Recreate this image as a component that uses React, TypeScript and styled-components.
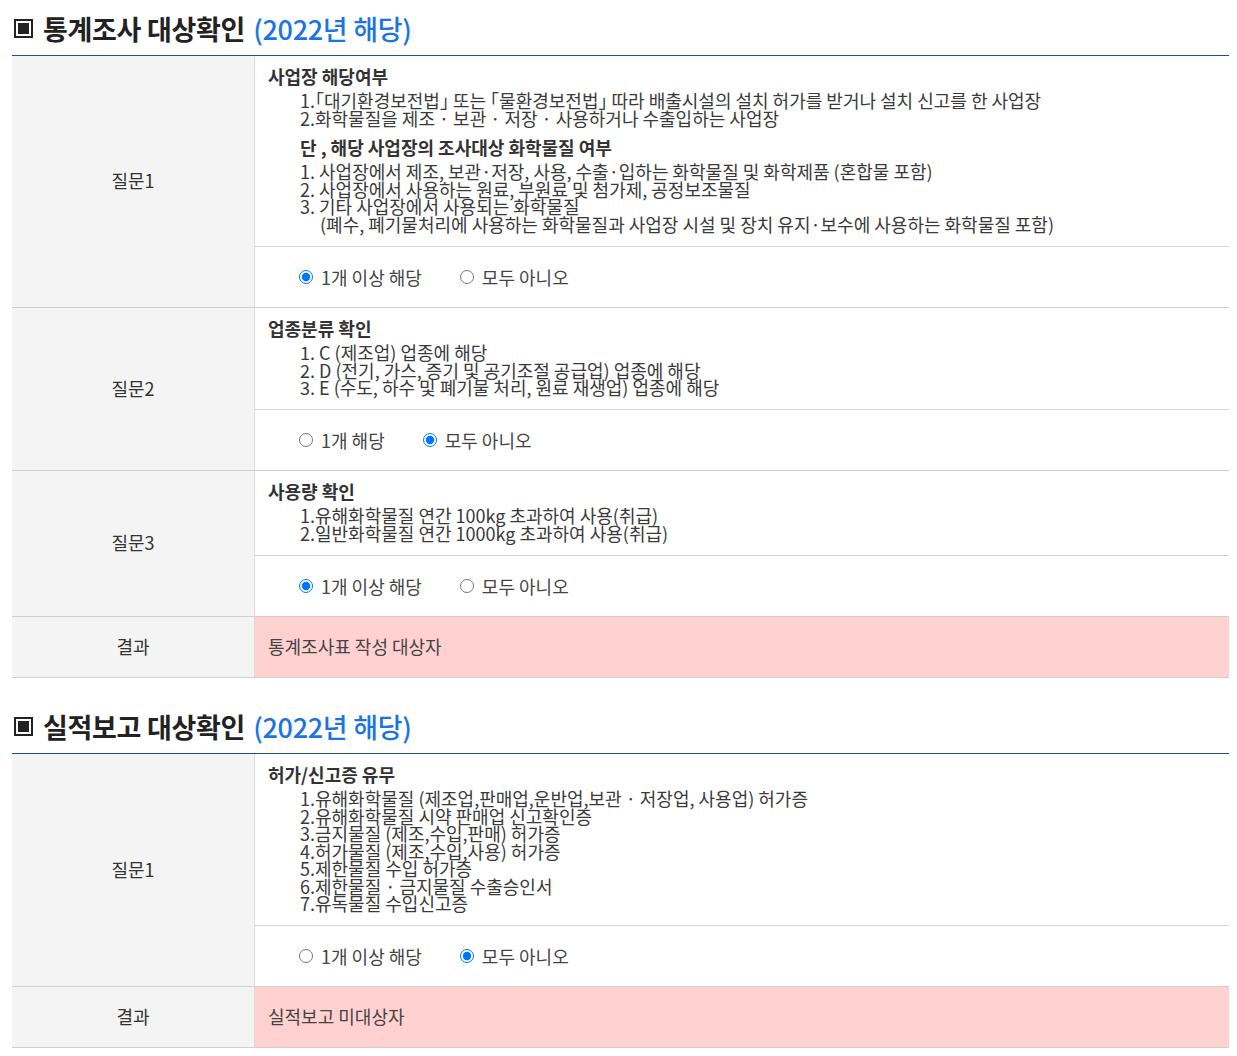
import React from 'react';
import styled, { createGlobalStyle } from 'styled-components';

const GlobalStyle = createGlobalStyle`
  body {
    margin: 0;
    background: #fff;
    font-family: "Noto Sans CJK KR", "Noto Sans", sans-serif;
    color: #333;
  }
`;

const Page = styled.div`
  padding: 0 8px 20px 12px;
`;

const Section = styled.section`
  & + & {
    margin-top: 20px;
  }
`;

const Title = styled.h2`
  margin: 0;
  height: 55px;
  padding: 2px 0 0 2px;
  box-sizing: border-box;
  display: flex;
  align-items: center;
  gap: 10px;
  font-size: 27px;
  font-weight: 700;
  color: #222;
  letter-spacing: -0.3px;
`;

const TitleMark = styled.span`
  width: 19px;
  height: 19px;
  box-sizing: border-box;
  border: 2px solid #222;
  display: flex;
  align-items: center;
  justify-content: center;
  flex: none;
  &::after {
    content: '';
    width: 11px;
    height: 11px;
    background: #222;
  }
`;

const Year = styled.span`
  color: #1b75e0;
  font-weight: 500;
  margin-left: 8px;
`;

const Table = styled.div`
  border-top: 1px solid #1f4e8c;
`;

const Row = styled.div`
  display: grid;
  grid-template-columns: 243px 1fr;
  border-bottom: 1px solid #cfcfcf;
`;

const Label = styled.div`
  background: #f4f4f4;
  border-right: 1px solid #dcdcdc;
  display: flex;
  align-items: center;
  justify-content: center;
  padding-bottom: 3px;
  font-size: 18px;
  color: #333;
`;

const Cell = styled.div`
  display: flex;
  flex-direction: column;
`;

const Content = styled.div<{ $odd?: boolean }>`
  padding: 10px 13px ${(p) => (p.$odd ? '12.5px' : '13px')};
  font-size: 18px;
  font-feature-settings: "halt";
`;

const Heading = styled.div<{ $indent?: boolean; $gap?: boolean }>`
  font-weight: 700;
  line-height: 20px;
  color: #333;
  padding-left: ${(p) => (p.$indent ? '32px' : '0')};
  margin-top: ${(p) => (p.$gap ? '10px' : '0')};
`;

const List = styled.div`
  margin-top: 6px;
  padding-left: 32px;
  line-height: 17.5px;
  color: #3a3a3a;
`;

const Line = styled.div<{ $indent?: boolean }>`
  white-space: nowrap;
  padding-left: ${(p) => (p.$indent ? '20px' : '0')};
`;

const Options = styled.div`
  height: 61px;
  box-sizing: border-box;
  border-top: 1px solid #d5d5d5;
  padding-left: 44px;
  display: flex;
  align-items: center;
  gap: 38px;
  font-size: 18px;
  color: #444;
`;

const Option = styled.label`
  display: inline-flex;
  align-items: center;
  gap: 8px;
`;

const Radio = styled.input`
  width: 14px;
  height: 14px;
  margin: 0;
`;

const Result = styled.div`
  height: 60px;
  background: #ffd1d1;
  padding: 0 0 2px 13px;
  box-sizing: border-box;
  display: flex;
  align-items: center;
  font-size: 18px;
  color: #444;
`;

type Q = {
  label: string;
  blocks: { heading: string; sub?: boolean; lines: { text: string; indent?: boolean }[] }[];
  options: string[];
  checked: number;
  name: string;
};

const section1: Q[] = [
  {
    label: '질문1',
    name: 's1q1',
    blocks: [
      {
        heading: '사업장 해당여부',
        lines: [
          { text: '1.「대기환경보전법」 또는 「물환경보전법」 따라 배출시설의 설치 허가를 받거나 설치 신고를 한 사업장' },
          { text: '2.화학물질을 제조 · 보관 · 저장 · 사용하거나 수출입하는 사업장' },
        ],
      },
      {
        heading: '단 , 해당 사업장의 조사대상 화학물질 여부',
        sub: true,
        lines: [
          { text: '1. 사업장에서 제조, 보관·저장, 사용, 수출·입하는 화학물질 및 화학제품 (혼합물 포함)' },
          { text: '2. 사업장에서 사용하는 원료, 부원료 및 첨가제, 공정보조물질' },
          { text: '3. 기타 사업장에서 사용되는 화학물질' },
          { text: '(폐수, 폐기물처리에 사용하는 화학물질과 사업장 시설 및 장치 유지·보수에 사용하는 화학물질 포함)', indent: true },
        ],
      },
    ],
    options: ['1개 이상 해당', '모두 아니오'],
    checked: 0,
  },
  {
    label: '질문2',
    name: 's1q2',
    blocks: [
      {
        heading: '업종분류 확인',
        lines: [
          { text: '1. C (제조업) 업종에 해당' },
          { text: '2. D (전기, 가스, 증기 및 공기조절 공급업) 업종에 해당' },
          { text: '3. E (수도, 하수 및 폐기물 처리, 원료 재생업) 업종에 해당' },
        ],
      },
    ],
    options: ['1개 해당', '모두 아니오'],
    checked: 1,
  },
  {
    label: '질문3',
    name: 's1q3',
    blocks: [
      {
        heading: '사용량 확인',
        lines: [
          { text: '1.유해화학물질 연간 100kg 초과하여 사용(취급)' },
          { text: '2.일반화학물질 연간 1000kg 초과하여 사용(취급)' },
        ],
      },
    ],
    options: ['1개 이상 해당', '모두 아니오'],
    checked: 0,
  },
];

const section2: Q[] = [
  {
    label: '질문1',
    name: 's2q1',
    blocks: [
      {
        heading: '허가/신고증 유무',
        lines: [
          { text: '1.유해화학물질 (제조업,판매업,운반업,보관 · 저장업, 사용업) 허가증' },
          { text: '2.유해화학물질 시약 판매업 신고확인증' },
          { text: '3.금지물질 (제조,수입,판매) 허가증' },
          { text: '4.허가물질 (제조,수입,사용) 허가증' },
          { text: '5.제한물질 수입 허가증' },
          { text: '6.제한물질 · 금지물질 수출승인서' },
          { text: '7.유독물질 수입신고증' },
        ],
      },
    ],
    options: ['1개 이상 해당', '모두 아니오'],
    checked: 1,
  },
];

const QuestionRow = ({ q }: { q: Q }) => {
  const total = q.blocks.reduce((n, b) => n + b.lines.length, 0);
  return (
    <Row>
      <Label>{q.label}</Label>
      <Cell>
        <Content $odd={total % 2 === 1}>
          {q.blocks.map((b, i) => (
            <React.Fragment key={i}>
              <Heading $indent={b.sub} $gap={i > 0}>
                {b.heading}
              </Heading>
              <List>
                {b.lines.map((l, j) => (
                  <Line key={j} $indent={l.indent}>
                    {l.text}
                  </Line>
                ))}
              </List>
            </React.Fragment>
          ))}
        </Content>
        <Options>
          {q.options.map((o, i) => (
            <Option key={o}>
              <Radio type="radio" name={q.name} defaultChecked={i === q.checked} />
              {o}
            </Option>
          ))}
        </Options>
      </Cell>
    </Row>
  );
};

const ResultRow = ({ text }: { text: string }) => (
  <Row>
    <Label>결과</Label>
    <Result>{text}</Result>
  </Row>
);

export default function App() {
  return (
    <>
      <GlobalStyle />
      <Page>
        <Section>
          <Title>
            <TitleMark />
            <span>
              통계조사 대상확인<Year>(2022년 해당)</Year>
            </span>
          </Title>
          <Table>
            {section1.map((q) => (
              <QuestionRow key={q.name} q={q} />
            ))}
            <ResultRow text="통계조사표 작성 대상자" />
          </Table>
        </Section>
        <Section>
          <Title>
            <TitleMark />
            <span>
              실적보고 대상확인<Year>(2022년 해당)</Year>
            </span>
          </Title>
          <Table>
            {section2.map((q) => (
              <QuestionRow key={q.name} q={q} />
            ))}
            <ResultRow text="실적보고 미대상자" />
          </Table>
        </Section>
      </Page>
    </>
  );
}
